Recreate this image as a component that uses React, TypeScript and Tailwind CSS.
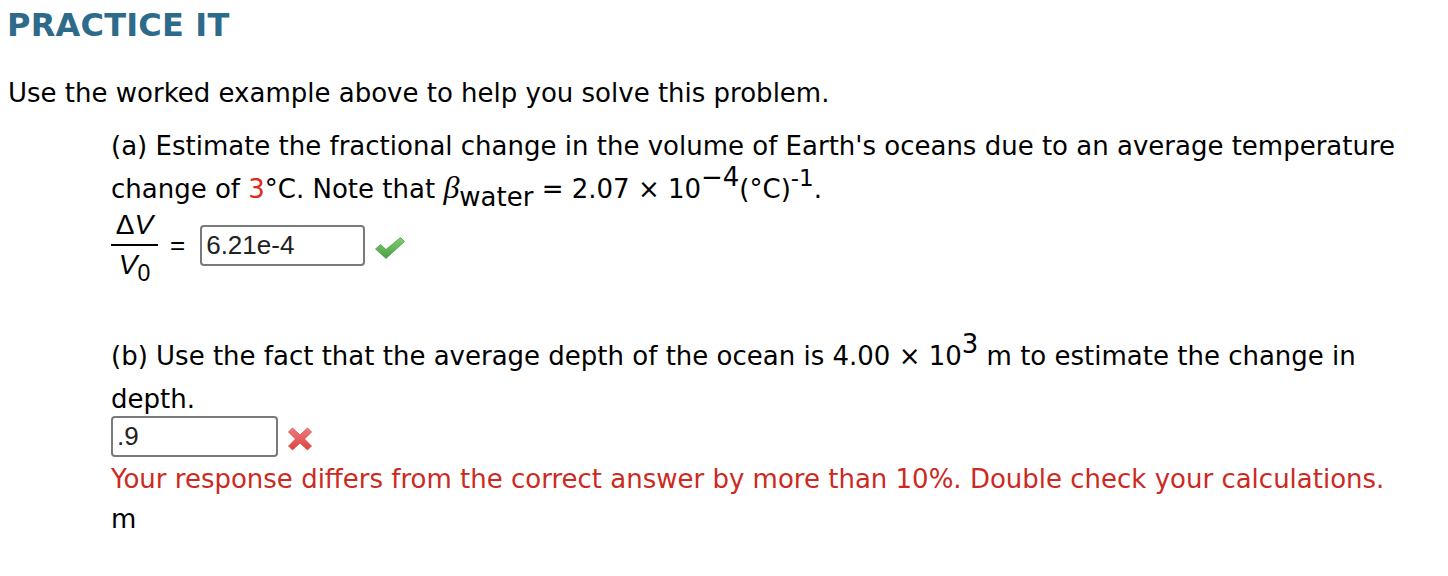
import React from "react";

function Check() {
  return (
    <svg width="32" height="24" viewBox="0 0 32 24" className="block">
      <defs>
        <linearGradient id="g" x1="0" y1="0" x2="0" y2="1">
          <stop offset="0" stopColor="#7fcf6f" />
          <stop offset="1" stopColor="#4a9e45" />
        </linearGradient>
      </defs>
      <path d="M1.5 13 L6.5 8.5 L12 13.5 L26.5 1.5 L30.5 5.5 L12 22.5 Z" fill="url(#g)" stroke="#4f9a4a" strokeWidth="0.8" strokeLinejoin="round" />
    </svg>
  );
}

function Cross() {
  return (
    <svg width="28" height="26" viewBox="0 0 28 26" className="block">
      <defs>
        <linearGradient id="r" x1="0" y1="0" x2="0" y2="1">
          <stop offset="0" stopColor="#ef7b78" />
          <stop offset="1" stopColor="#d94543" />
        </linearGradient>
      </defs>
      <path d="M2.5 6 L6.5 2 L14 9 L21.5 2 L25.5 6 L18.5 13 L25.5 20 L21.5 24 L14 17 L6.5 24 L2.5 20 L9.5 13 Z" fill="url(#r)" stroke="#d34b48" strokeWidth="0.8" strokeLinejoin="round" />
    </svg>
  );
}

export default function App() {
  return (
    <div className="w-[1448px] h-[576px] bg-white text-black overflow-hidden" style={{ fontFamily: "'DejaVu Sans', Verdana, sans-serif" }}>
      <div className="pl-[7px] pt-[6px]">
        <h1 className="text-[32px] font-bold text-[#2e6a8a] leading-[38px] tracking-[0.2px]">PRACTICE IT</h1>
        <p className="mt-[33px] pl-[1px] text-[26px] leading-[32px]">Use the worked example above to help you solve this problem.</p>
        <div className="pl-[104px] mt-[16px] text-[26px] leading-[43px] w-[1411px]">
          <p>
            (a) Estimate the fractional change in the volume of Earth's oceans due to an average temperature change of{" "}
            <span className="text-[#e0281b]">3</span>°C. Note that{" "}
            <span className="text-[32px] leading-none" style={{ fontFamily: "'Liberation Serif', serif" }}><i>β</i></span>
            <sub className="text-[26px] relative top-[8px]">water</sub> = 2.07 × 10<sup className="text-[26px] relative top-[-12px]">−4</sup>(°C)<sup className="text-[23px] relative top-[-12px]">-1</sup>.
          </p>
          <div className="flex items-center mt-[-1px]">
            <div className="flex flex-col items-center text-[28px]" style={{ fontFamily: "'Liberation Sans', Arial, sans-serif" }}>
              <span className="leading-[30px] px-[1px]">Δ<i>V</i></span>
              <span className="w-[47px] h-[2px] bg-black my-[4px]" />
              <span className="leading-[30px]"><i>V</i><sub className="text-[23px] relative top-[7px]">0</sub></span>
            </div>
            <span className="ml-[12px] mr-[15px] text-[26px]" style={{ fontFamily: "'Liberation Sans', Arial, sans-serif" }}>=</span>
            <div className="w-[165px] h-[41px] border-2 border-[#7a7a7a] rounded-[4px] flex items-center px-[4px] text-[26px] text-[#222]" style={{ fontFamily: "'Liberation Sans', Arial, sans-serif" }}>6.21e-4</div>
            <span className="ml-[9px] mt-[6px]"><Check /></span>
          </div>
          <p className="mt-[55px]">
            (b) Use the fact that the average depth of the ocean is 4.00 × 10<sup className="text-[26px] relative top-[-12px]">3</sup> m to estimate the change in depth.
          </p>
          <div className="flex items-center mt-[-5px]">
            <div className="w-[167px] h-[41px] border-2 border-[#7a7a7a] rounded-[4px] flex items-center px-[4px] text-[26px] text-[#222]" style={{ fontFamily: "'Liberation Sans', Arial, sans-serif" }}>.9</div>
            <span className="ml-[8px] mt-[4px]"><Cross /></span>
          </div>
          <p className="text-[#cc2a1f] mt-[1px]">Your response differs from the correct answer by more than 10%. Double check your calculations.</p>
          <p className="mt-[-3px]">m</p>
        </div>
      </div>
    </div>
  );
}
